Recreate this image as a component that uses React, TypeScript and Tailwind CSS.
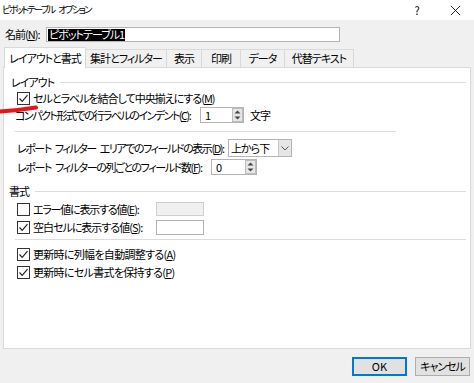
import React from "react";

const font = "font-['Noto_Sans_CJK_JP','Noto_Sans_CJK_SC',sans-serif] [font-feature-settings:'palt'] text-[11px] tracking-[-1px] leading-none text-black whitespace-nowrap";

function Sp() {
  return <span className="inline-block w-[4px]" />;
}

function Check({ checked }: { checked: boolean }) {
  return (
    <span className="w-[13px] h-[13px] border border-[#333] bg-white flex items-center justify-center shrink-0">
      {checked && (
        <svg width="11" height="11" viewBox="0 0 11 11">
          <path d="M1.5 5.5 L4.2 8.3 L9.5 2.2" fill="none" stroke="#222" strokeWidth="1.2" />
        </svg>
      )}
    </span>
  );
}

function Spinner() {
  return (
    <span className="w-[11px] h-[14px] bg-[#e6e6e6] border border-[#bcbcbc] flex flex-col items-center justify-center gap-[2px] shrink-0">
      <svg width="7" height="4" viewBox="0 0 7 4"><path d="M0.5 3.5 L3.5 0.5 L6.5 3.5Z" fill="#444" /></svg>
      <svg width="7" height="4" viewBox="0 0 7 4"><path d="M0.5 0.5 L3.5 3.5 L6.5 0.5Z" fill="#444" /></svg>
    </span>
  );
}

function Tab({ label, w, active }: { label: string; w: number; active?: boolean }) {
  return (
    <div
      style={{ width: w }}
      className={
        active
          ? "h-[21px] bg-white border border-b-0 border-[#d9d9d9] flex items-center justify-center relative z-10 -mb-px shrink-0"
          : "h-[18px] bg-[#f0f0f0] border border-b-0 border-l-0 border-[#d9d9d9] flex items-center justify-center shrink-0"
      }
    >
      {label}
    </div>
  );
}

export default function App() {
  return (
    <div className={`w-[474px] h-[383px] bg-[#f0f0f0] overflow-hidden relative flex flex-col ${font}`}>
      {/* title bar */}
      <div className="h-[20px] bg-white flex items-center pl-[2px] shrink-0">
        <span className="flex-1 text-[9.5px] tracking-[-1.9px]">
          ピボットテーブル<Sp />オプション
        </span>
        <span className="w-[12px] text-center mr-[27px] tracking-normal">?</span>
        <svg width="11" height="11" viewBox="0 0 12 12" className="mr-[13px]">
          <path d="M1 1 L11 11 M11 1 L1 11" stroke="#111" strokeWidth="1" />
        </svg>
      </div>

      {/* name row */}
      <div className="flex items-center pl-[5px] mt-[7px] h-[15px] shrink-0">
        <span className="w-[41px]">
          名前(<span className="underline">N</span>):
        </span>
        <div className="w-[294px] h-[15px] bg-white border border-[#b4b4b4] flex items-center pl-px">
          <span className="bg-black text-white h-[12px] px-px flex items-center">ピボットテーブル1</span>
        </div>
      </div>

      {/* tabs */}
      <div className="flex items-end pl-[4px] mt-[5px] shrink-0">
        <Tab label="レイアウトと書式" w={82} active />
        <Tab label="集計とフィルター" w={81} />
        <Tab label="表示" w={35} />
        <Tab label="印刷" w={39} />
        <Tab label="データ" w={44} />
        <Tab label="代替テキスト" w={69} />
      </div>

      {/* panel */}
      <div className="ml-[3px] w-[468px] h-[282px] bg-white border border-[#d9d9d9] shrink-0 flex flex-col pt-[6px]">
        {/* header レイアウト */}
        <div className="h-[16px] flex items-center pl-[7px]">
          <span>レイアウト</span>
          <div className="flex-1 h-px bg-[#dcdcdc] ml-[6px] mr-[4px]" />
        </div>
        <div className="h-[16px] flex items-center pl-[13px] gap-[3px]">
          <Check checked />
          <span>
            セルとラベルを結合して中央揃えにする(<span className="underline">M</span>)
          </span>
        </div>
        <div className="h-[16px] mt-px flex items-center pl-[11px]">
          <span className="w-[185px] tracking-[-1.5px]">
            コンパクト形式での行ラベルのインデント(<span className="underline">C</span>):
          </span>
          <div className="w-[44px] h-[16px] bg-white border border-[#b4b4b4] flex items-center pl-[4px]">
            <span className="flex-1">1</span>
            <Spinner />
          </div>
          <span className="ml-[6px]">文字</span>
        </div>
        <div className="h-px bg-[#dcdcdc] mt-[8px] ml-[11px] w-[381px]" />

        <div className="h-[18px] mt-[7px] flex items-center pl-[13px]">
          <span className="w-[211px] tracking-[-1.45px]">
            レポート<Sp />フィルター<Sp />エリアでのフィールドの表示(<span className="underline">D</span>):
          </span>
          <div className="w-[64px] h-[18px] bg-white border border-[#b4b4b4] flex items-center pl-[2px]">
            <span className="flex-1">上から下</span>
            <span className="w-[13px] h-[16px] bg-[#e6e6e6] border-l border-[#c8c8c8] flex items-center justify-center">
              <svg width="8" height="5" viewBox="0 0 8 5"><path d="M0.5 0.5 L4 4 L7.5 0.5" fill="none" stroke="#555" strokeWidth="1" /></svg>
            </span>
          </div>
        </div>
        <div className="h-[16px] mt-[2px] flex items-center pl-[13px]">
          <span className="w-[194px] tracking-[-1.4px]">
            レポート<Sp />フィルターの列ごとのフィールド数(<span className="underline">F</span>):
          </span>
          <div className="w-[46px] h-[16px] bg-white border border-[#b4b4b4] flex items-center pl-[4px]">
            <span className="flex-1">0</span>
            <Spinner />
          </div>
        </div>

        {/* header 書式 */}
        <div className="h-[16px] mt-[8px] flex items-center pl-[5px]">
          <span>書式</span>
          <div className="flex-1 h-px bg-[#dcdcdc] ml-[6px] mr-[4px]" />
        </div>
        <div className="h-[16px] mt-[2px] flex items-center pl-[13px]">
          <div className="w-[139px] flex items-center gap-[3px]">
            <Check checked={false} />
            <span className="tracking-[-1.2px]">
              エラー値に表示する値(<span className="underline">E</span>):
            </span>
          </div>
          <div className="w-[48px] h-[14px] bg-[#f0f0f0] border border-[#cfcfcf]" />
        </div>
        <div className="h-[16px] mt-[2px] flex items-center pl-[13px]">
          <div className="w-[139px] flex items-center gap-[3px]">
            <Check checked />
            <span>
              空白セルに表示する値(<span className="underline">S</span>):
            </span>
          </div>
          <div className="w-[48px] h-[15px] bg-white border border-[#b4b4b4]" />
        </div>
        <div className="h-px bg-[#dcdcdc] mt-[4px] ml-[11px] mr-[4px]" />
        <div className="h-[16px] mt-[6px] flex items-center pl-[13px] gap-[3px]">
          <Check checked />
          <span className="tracking-[-0.7px]">
            更新時に列幅を自動調整する(<span className="underline">A</span>)
          </span>
        </div>
        <div className="h-[16px] mt-[2px] flex items-center pl-[13px] gap-[3px]">
          <Check checked />
          <span className="tracking-[-0.7px]">
            更新時にセル書式を保持する(<span className="underline">P</span>)
          </span>
        </div>
      </div>

      {/* buttons */}
      <div className="flex justify-end gap-[8px] pr-[4px] mt-[8px]">
        <div className="w-[55px] h-[19px] bg-[#e1e1e1] border-2 border-[#0078d7] flex items-center justify-center tracking-normal">OK</div>
        <div className="w-[55px] h-[19px] bg-[#e1e1e1] border border-[#adadad] flex items-center justify-center">キャンセル</div>
      </div>

      {/* red annotation stroke */}
      <svg className="absolute left-0 top-[103px]" width="40" height="12" viewBox="0 0 40 12">
        <path d="M0 8.5 Q 18 7.5 36 4.5" fill="none" stroke="#e8141b" strokeWidth="4" strokeLinecap="round" />
      </svg>
    </div>
  );
}
